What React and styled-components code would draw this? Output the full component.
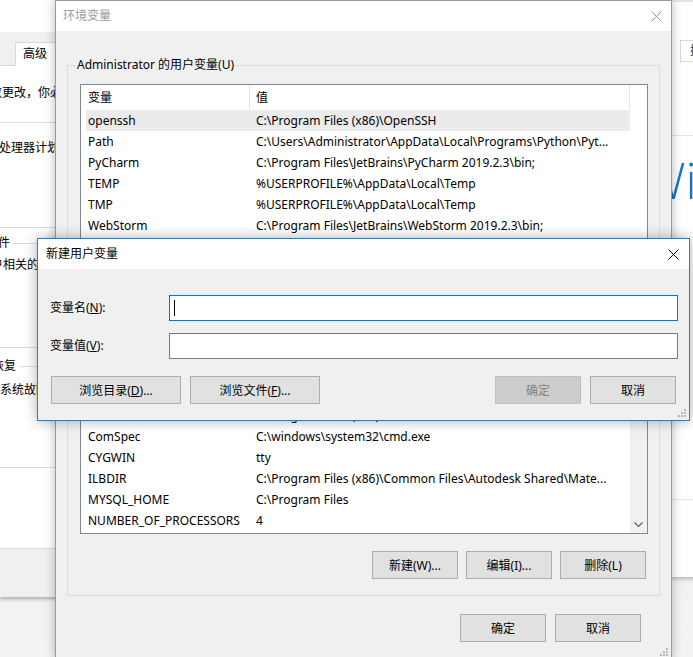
import React from 'react';
import styled, { createGlobalStyle } from 'styled-components';

const GlobalStyle = createGlobalStyle`
  html, body {
    margin: 0;
    padding: 0;
  }
  body {
    background: #ececec;
    font-family: "Noto Sans", "Noto Sans CJK SC", sans-serif;
    font-size: 12px;
    color: #000;
  }
`;

const Desktop = styled.div`
  position: relative;
  width: 693px;
  height: 657px;
  overflow: hidden;
  background: linear-gradient(#e8e8e8, #f3f3f3);
`;

/* ---------- background window on the left (系统属性) ---------- */

const SysWindow = styled.div`
  position: absolute;
  left: 0;
  top: 0;
  width: 60px;
  height: 597px;
  z-index: 1;
  display: flex;
  flex-direction: column;
  background: #f0f0f0;
  box-shadow: 0 2px 4px rgba(0, 0, 0, 0.3);
`;

const SysTitle = styled.div`
  height: 32px;
  flex: none;
  background: #fff;
`;

const TabStrip = styled.div`
  height: 34px;
  flex: none;
  box-sizing: border-box;
  display: flex;
  align-items: flex-end;
  border-bottom: 1px solid #d9d9d9;
`;

const Tab = styled.div`
  position: relative;
  height: 24px;
  margin-left: 15px;
  margin-bottom: -1px;
  padding-left: 7px;
  flex: 1;
  box-sizing: border-box;
  background: #fff;
  border-top: 1px solid #d9d9d9;
  border-left: 1px solid #d9d9d9;
  line-height: 22px;
  white-space: nowrap;
`;

const SysPage = styled.div`
  height: 483px;
  flex: none;
  box-sizing: border-box;
  padding-top: 19px;
  background: #fff;
  border-bottom: 1px solid #dcdcdc;
  overflow: hidden;
`;

const PageText = styled.div`
  margin-left: ${(p) => p.$shift || 0}px;
  margin-top: ${(p) => p.$top || 0}px;
  line-height: 16px;
  white-space: nowrap;
`;

const Group = styled.div`
  height: ${(p) => p.$h}px;
  margin-top: ${(p) => p.$top}px;
  box-sizing: border-box;
  border-bottom: 1px solid #dcdcdc;
`;

const GroupHead = styled.div`
  display: flex;
  align-items: center;
  height: 16px;
`;

const GroupLabel = styled.span`
  margin-left: ${(p) => p.$shift}px;
  line-height: 16px;
  white-space: nowrap;
`;

const Rule = styled.div`
  flex: 1;
  height: 1px;
  margin-left: ${(p) => p.$gap || 0}px;
  background: #dcdcdc;
`;

/* ---------- background window on the right (控制面板) ---------- */

const PanelWindow = styled.div`
  position: absolute;
  left: 671px;
  top: 2px;
  width: 60px;
  height: 575px;
  z-index: 1;
  background: #fff;
  box-shadow: 0 2px 4px rgba(0, 0, 0, 0.25);
  overflow: hidden;
`;

const SearchBox = styled.div`
  width: 100px;
  height: 22px;
  margin: 38px 0 0 9px;
  padding-left: 9px;
  box-sizing: border-box;
  border: 1px solid #d9d9d9;
  line-height: 20px;
  color: #333;
  white-space: nowrap;
`;

const PanelRule = styled.div`
  height: 1px;
  margin-top: ${(p) => p.$top}px;
  background: #e3e3e3;
`;

const Logo = styled.div`
  margin: 19px 0 0 -30px;
  font-family: "Open Sans", "Noto Sans", sans-serif;
  font-weight: 300;
  font-size: 50px;
  line-height: 50px;
  color: #1475c9;
  white-space: nowrap;
`;

/* ---------- 环境变量 window ---------- */

const EnvWindow = styled.div`
  position: absolute;
  left: 55px;
  top: 0;
  width: 617px;
  height: 660px;
  z-index: 2;
  box-sizing: border-box;
  display: flex;
  flex-direction: column;
  background: #f0f0f0;
  border: 1px solid #9a9a9a;
  box-shadow: 0 0 10px rgba(0, 0, 0, 0.28);
`;

const TitleBar = styled.div`
  height: ${(p) => p.$h}px;
  flex: none;
  display: flex;
  align-items: center;
  padding-left: ${(p) => p.$pad}px;
  background: #fff;
  color: ${(p) => (p.$inactive ? '#9a9a9a' : '#000')};
`;

const TitleText = styled.span`
  flex: 1;
  line-height: 16px;
`;

const CloseIcon = styled.svg`
  width: 11px;
  height: 11px;
  margin-right: ${(p) => p.$right}px;
  flex: none;
`;

const EnvBody = styled.div`
  padding: 34px 11px 0 11px;
`;

const GroupBox = styled.div`
  position: relative;
  margin-top: ${(p) => p.$top || 0}px;
  padding: 18px 11px 16px 12px;
  border: 1px solid #dcdcdc;
`;

const Legend = styled.span`
  position: absolute;
  top: -9px;
  left: 8px;
  padding: 0 1px;
  background: #f0f0f0;
  line-height: 16px;
  white-space: nowrap;
`;

const ListBox = styled.div`
  height: ${(p) => p.$h}px;
  box-sizing: border-box;
  display: flex;
  border: 1px solid #828790;
  background: #fff;
  overflow: hidden;
`;

const ListMain = styled.div`
  flex: 1;
  display: flex;
  flex-direction: column;
  min-width: 0;
`;

const HeaderRow = styled.div`
  height: 25px;
  flex: none;
  display: flex;
  line-height: 25px;
`;

const HeaderCell = styled.div`
  box-sizing: border-box;
  width: ${(p) => (p.$w ? `${p.$w}px` : 'auto')};
  flex: ${(p) => (p.$w ? 'none' : 1)};
  padding-left: ${(p) => p.$pad}px;
  border-right: 1px solid #e5e5e5;
`;

const Rows = styled.div`
  flex: 1;
  display: flex;
  flex-direction: column;
  justify-content: ${(p) => (p.$bottom ? 'flex-end' : 'flex-start')};
  padding: 0 0 ${(p) => (p.$bottom ? 2 : 0)}px 5px;
  overflow: hidden;
`;

const Row = styled.div`
  height: 21px;
  flex: none;
  display: flex;
  line-height: 21px;
  white-space: nowrap;
  background: ${(p) => (p.$selected ? '#ebebeb' : 'transparent')};
`;

const NameCell = styled.div`
  width: 164px;
  flex: none;
  box-sizing: border-box;
  padding-left: 2px;
  overflow: hidden;
`;

const ValueCell = styled.div`
  flex: 1;
  padding-left: 6px;
  overflow: hidden;
`;

const ScrollTrack = styled.div`
  width: 17px;
  flex: none;
  display: flex;
  flex-direction: column;
  justify-content: space-between;
  align-items: center;
  background: ${(p) => (p.$visible ? '#f0f0f0' : '#fff')};
`;

const ScrollArrow = styled.svg`
  width: 17px;
  height: 17px;
`;

const ButtonRow = styled.div`
  display: flex;
  justify-content: flex-end;
  gap: ${(p) => p.$gap}px;
  margin-top: ${(p) => p.$top}px;
  padding-right: ${(p) => p.$right || 0}px;
`;

const WinButton = styled.button`
  width: ${(p) => p.$w}px;
  height: 28px;
  padding: 0;
  box-sizing: border-box;
  font: inherit;
  color: ${(p) => (p.disabled ? '#838383' : '#000')};
  background: ${(p) => (p.disabled ? '#cccccc' : '#e1e1e1')};
  border: 1px solid ${(p) => (p.disabled ? '#bfbfbf' : '#adadad')};
  border-radius: 0;
`;

const Grip = styled.svg`
  position: absolute;
  right: 2px;
  bottom: 2px;
  width: 10px;
  height: 10px;
`;

/* ---------- 新建用户变量 dialog ---------- */

const Dialog = styled.div`
  position: absolute;
  left: 37px;
  top: 238px;
  width: 653px;
  height: 183px;
  z-index: 3;
  box-sizing: border-box;
  display: flex;
  flex-direction: column;
  background: #f0f0f0;
  border: 1px solid #1883d7;
  box-shadow: 0 0 12px rgba(0, 0, 0, 0.32);
`;

const DialogBody = styled.div`
  padding: 26px 11px 16px 12px;
`;

const FieldRow = styled.div`
  display: flex;
  align-items: center;
  height: 26px;
  margin-top: ${(p) => p.$top || 0}px;
`;

const FieldLabel = styled.label`
  width: 119px;
  flex: none;
  line-height: 16px;
`;

const Field = styled.div`
  flex: 1;
  height: 26px;
  box-sizing: border-box;
  display: flex;
  align-items: center;
  background: #fff;
  border: 1px solid ${(p) => (p.$focused ? '#0078d7' : '#7a7a7a')};
`;

const Caret = styled.span`
  width: 1px;
  height: 16px;
  margin-left: 4px;
  background: #000;
`;

const DialogButtons = styled.div`
  display: flex;
  margin-top: 17px;
  padding: 0 2px 0 1px;
  gap: ${(p) => p.$gap}px;
`;

const Spacer = styled.div`
  flex: 1;
`;

const userVars = [
  ['openssh', 'C:\\Program Files (x86)\\OpenSSH'],
  ['Path', 'C:\\Users\\Administrator\\AppData\\Local\\Programs\\Python\\Pyt...'],
  ['PyCharm', 'C:\\Program Files\\JetBrains\\PyCharm 2019.2.3\\bin;'],
  ['TEMP', '%USERPROFILE%\\AppData\\Local\\Temp'],
  ['TMP', '%USERPROFILE%\\AppData\\Local\\Temp'],
  ['WebStorm', 'C:\\Program Files\\JetBrains\\WebStorm 2019.2.3\\bin;'],
];

const systemVars = [
  ['AutoCAD', 'C:\\Program Files (x86)\\Common Files\\Autodesk Shared\\'],
  ['ComSpec', 'C:\\windows\\system32\\cmd.exe'],
  ['CYGWIN', 'tty'],
  ['ILBDIR', 'C:\\Program Files (x86)\\Common Files\\Autodesk Shared\\Mate...'],
  ['MYSQL_HOME', 'C:\\Program Files'],
  ['NUMBER_OF_PROCESSORS', '4'],
];

const Close = ({ color, right }) => (
  <CloseIcon $right={right} viewBox="0 0 11 11">
    <path d="M0.5 0.5 L10.5 10.5 M10.5 0.5 L0.5 10.5" stroke={color} strokeWidth="1" fill="none" />
  </CloseIcon>
);

const GripDots = () => (
  <Grip viewBox="0 0 10 10">
    {[[8, 2], [5, 5], [8, 5], [2, 8], [5, 8], [8, 8]].map(([x, y]) => (
      <rect key={`${x}-${y}`} x={x - 1} y={y - 1} width="2" height="2" fill="#b8b8b8" />
    ))}
  </Grip>
);

const VarList = ({ rows, height, scroll, selected }) => (
  <ListBox $h={height}>
    <ListMain>
      <HeaderRow>
        <HeaderCell $w={169} $pad={7}>变量</HeaderCell>
        <HeaderCell $pad={6}>值</HeaderCell>
      </HeaderRow>
      <Rows $bottom={scroll}>
        {rows.map(([name, value], idx) => (
          <Row key={name} $selected={idx === selected}>
            <NameCell>{name}</NameCell>
            <ValueCell>{value}</ValueCell>
          </Row>
        ))}
      </Rows>
    </ListMain>
    <ScrollTrack $visible={scroll}>
      {scroll && (
        <>
          <ScrollArrow viewBox="0 0 17 17">
            <path d="M4.5 10 L8.5 6 L12.5 10" stroke="#606060" strokeWidth="1.2" fill="none" />
          </ScrollArrow>
          <ScrollArrow viewBox="0 0 17 17">
            <path d="M4.5 6.5 L8.5 10.5 L12.5 6.5" stroke="#606060" strokeWidth="1.2" fill="none" />
          </ScrollArrow>
        </>
      )}
    </ScrollTrack>
  </ListBox>
);

const App = () => {
  return (
    <>
      <GlobalStyle />
      <Desktop>
        <SysWindow>
          <SysTitle />
          <TabStrip>
            <Tab>高级</Tab>
          </TabStrip>
          <SysPage>
            <PageText $shift={-10}>数更改，你必须作为管理员登录。</PageText>
            <Group $h={106} $top={21}>
              <Rule />
              <PageText $top={17} $shift={-1}>处理器计划，内存使用，以及虚拟内存</PageText>
            </Group>
            <Group $h={113} $top={7}>
              <GroupHead>
                <GroupLabel $shift={-2}>件</GroupLabel>
                <Rule $gap={3} />
              </GroupHead>
              <PageText $top={6} $shift={-9}>户相关的桌面设置</PageText>
            </Group>
            <Group $h={110} $top={10}>
              <GroupHead>
                <GroupLabel $shift={-8}>恢复</GroupLabel>
                <Rule $gap={3} />
              </GroupHead>
              <PageText $top={8}>系统故障和调试信息</PageText>
            </Group>
          </SysPage>
        </SysWindow>

        <PanelWindow>
          <SearchBox>搜索控制面板</SearchBox>
          <PanelRule $top={73} />
          <Logo>Windows 10</Logo>
          <PanelRule $top={294} />
        </PanelWindow>

        <EnvWindow>
          <TitleBar $h={30} $pad={7} $inactive>
            <TitleText>环境变量</TitleText>
            <Close color="#9a9a9a" right={9} />
          </TitleBar>
          <EnvBody>
            <GroupBox>
              <Legend>Administrator 的用户变量(U)</Legend>
              <VarList rows={userVars} height={186} selected={0} />
              <ButtonRow $gap={8} $top={17} $right={2}>
                <WinButton $w={86}>新建(N)...</WinButton>
                <WinButton $w={86}>编辑(E)...</WinButton>
                <WinButton $w={86}>删除(D)</WinButton>
              </ButtonRow>
            </GroupBox>
            <GroupBox $top={14}>
              <Legend>系统变量(S)</Legend>
              <VarList rows={systemVars} height={169} scroll />
              <ButtonRow $gap={8} $top={17} $right={2}>
                <WinButton $w={86}>新建(W)...</WinButton>
                <WinButton $w={86}>编辑(I)...</WinButton>
                <WinButton $w={86}>删除(L)</WinButton>
              </ButtonRow>
            </GroupBox>
            <ButtonRow $gap={9} $top={18} $right={19}>
              <WinButton $w={86}>确定</WinButton>
              <WinButton $w={86}>取消</WinButton>
            </ButtonRow>
          </EnvBody>
          <GripDots />
        </EnvWindow>

        <Dialog>
          <TitleBar $h={30} $pad={8}>
            <TitleText>新建用户变量</TitleText>
            <Close color="#000" right={10} />
          </TitleBar>
          <DialogBody>
            <FieldRow>
              <FieldLabel>变量名(<u>N</u>):</FieldLabel>
              <Field $focused>
                <Caret />
              </Field>
            </FieldRow>
            <FieldRow $top={12}>
              <FieldLabel>变量值(<u>V</u>):</FieldLabel>
              <Field />
            </FieldRow>
            <DialogButtons $gap={9}>
              <WinButton $w={130}>浏览目录(<u>D</u>)...</WinButton>
              <WinButton $w={130}>浏览文件(<u>F</u>)...</WinButton>
              <Spacer />
              <WinButton $w={86} disabled>确定</WinButton>
              <WinButton $w={86}>取消</WinButton>
            </DialogButtons>
          </DialogBody>
          <GripDots />
        </Dialog>
      </Desktop>
    </>
  );
};

export default App;
